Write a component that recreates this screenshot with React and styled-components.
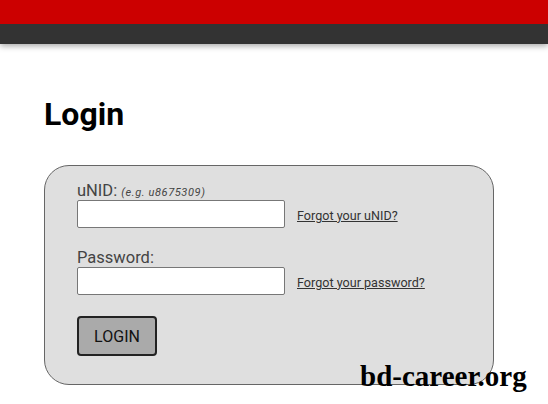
import React from "react";
import styled, { createGlobalStyle } from "styled-components";

const Global = createGlobalStyle`
  html, body { margin: 0; padding: 0; background: #fff; }
  body { font-family: Roboto, "Liberation Sans", sans-serif; color: #000; }
`;

const Page = styled.div`
  position: relative;
  width: 548px;
  height: 404px;
  overflow: hidden;
`;

const Header = styled.header`
  display: flex;
  flex-direction: column;
  box-shadow: 0 2px 6px rgba(0, 0, 0, 0.35);
`;

const Bar = styled.div`
  height: ${(p) => p.$h}px;
  background: ${(p) => p.$c};
`;

const Main = styled.main`
  padding: 0 0 0 44px;
`;

const Title = styled.h1`
  margin: 51px 0 0;
  font-size: 32px;
  line-height: 38px;
  font-weight: 700;
`;

const Panel = styled.form`
  box-sizing: border-box;
  margin-top: 32px;
  width: 450px;
  height: 220px;
  border: 1px solid #666;
  border-radius: 25px;
  background: #dfdfdf;
  padding: 15px 32px;
  display: flex;
  flex-direction: column;
`;

const Field = styled.div`
  display: flex;
  flex-direction: column;
  margin-bottom: ${(p) => p.$mb}px;
`;

const Label = styled.label`
  display: block;
  font-size: 16.5px;
  line-height: 19px;
  height: 19px;
  color: #444;
`;

const Hint = styled.span`
  font-size: 11px;
  line-height: 1;
  font-style: italic;
  color: #444;
  letter-spacing: 0.6px;
`;

const Row = styled.div`
  display: flex;
  align-items: center;
  gap: 12px;
`;

const Input = styled.input`
  box-sizing: border-box;
  width: 208px;
  height: 28px;
  border: 1px solid #777;
  border-radius: 2px;
  background: #fff;
  padding: 0 4px;
  margin: 0;
`;

const Link = styled.a`
  font-size: 12.6px;
  color: #333;
  text-decoration: underline;
  margin-top: 2px;
`;

const Button = styled.button`
  box-sizing: border-box;
  width: 80px;
  height: 40px;
  background: #aaa;
  border: 2px solid #222;
  border-radius: 4px;
  font-family: Roboto, "Liberation Sans", sans-serif;
  font-size: 16px;
  color: #111;
  padding: 0;
`;

const Watermark = styled.div`
  position: absolute;
  left: 360px;
  top: 360px;
  font-family: "Liberation Serif", "DejaVu Serif", serif;
  font-weight: 700;
  font-size: 29px;
  color: #000;
`;

export default function App() {
  return (
    <Page>
      <Global />
      <Header>
        <Bar $h={24} $c="#cc0000" />
        <Bar $h={20} $c="#333" />
      </Header>
      <Main>
        <Title>Login</Title>
        <Panel onSubmit={(e) => e.preventDefault()}>
          <Field $mb={20}>
            <Label>
              uNID: <Hint>(e.g. u8675309)</Hint>
            </Label>
            <Row>
              <Input type="text" />
              <Link href="#">Forgot your uNID?</Link>
            </Row>
          </Field>
          <Field $mb={21}>
            <Label>Password:</Label>
            <Row>
              <Input type="password" />
              <Link href="#">Forgot your password?</Link>
            </Row>
          </Field>
          <div>
            <Button type="submit">LOGIN</Button>
          </div>
        </Panel>
      </Main>
      <Watermark>bd-career.org</Watermark>
    </Page>
  );
}
